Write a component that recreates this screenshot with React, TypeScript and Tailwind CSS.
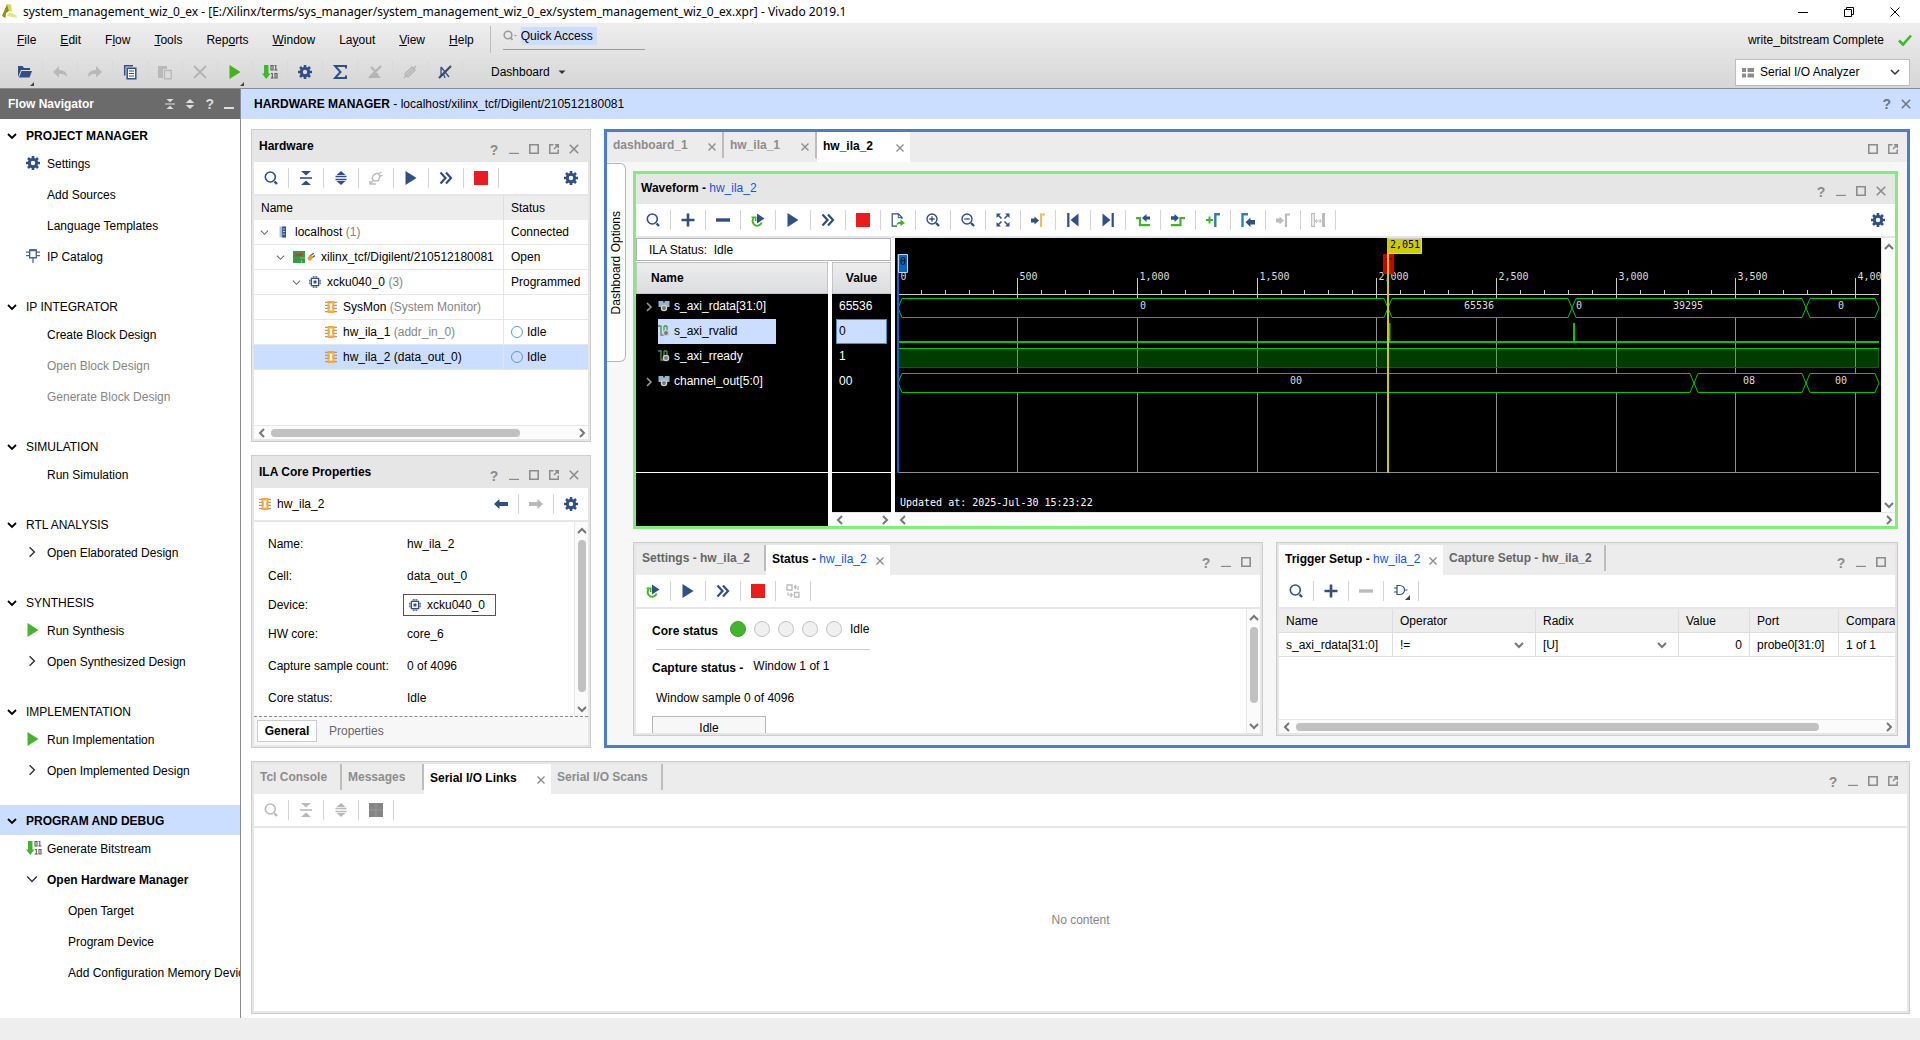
import React from 'react'

type IconProps = { className?: string }

const NAVY = '#2f4f87'
const GREEN = '#43b52a'

/* ---------- icons ---------- */

const Svg: React.FC<{ className?: string; box?: string; children: React.ReactNode }> = ({
  className = 'size-3.5',
  box = '0 0 14 14',
  children,
}) => (
  <svg viewBox={box} className={`shrink-0 ${className}`} fill="none" aria-hidden="true">
    {children}
  </svg>
)

const SearchIcon: React.FC<{ color?: string }> = ({ color = NAVY }) => (
  <Svg>
    <circle cx="6.3" cy="6" r="5" stroke={color} strokeWidth="1.6" />
    <path d="M10.5 10.5 L13 13" stroke={color} strokeWidth="2.4" />
  </Svg>
)

const CollapseIcon: React.FC<{ color?: string }> = ({ color = NAVY }) => (
  <Svg>
    <path d="M2 0H12L7 4.5ZM2 14H12L7 9.5Z" fill={color} />
    <path d="M1 7H13" stroke={color} strokeWidth="1.6" />
  </Svg>
)

const ExpandIcon: React.FC<{ color?: string }> = ({ color = NAVY }) => (
  <Svg>
    <path d="M2.5 4H11.5L7 0ZM2.5 10H11.5L7 14Z" fill={color} />
    <path d="M1.5 5.5H12.5M1.5 8.5H12.5" stroke={color} strokeWidth="1.6" />
  </Svg>
)

const PlugDimIcon = () => (
  <Svg>
    <path d="M4.5 4 L8.5 2 L11 5 L9.5 9.5 L5 10 L3 7.5Z" stroke="#bcbcbc" strokeWidth="1.4" />
    <path d="M1 13 L4 9.5M9.5 3 L12.5 1M11 5.5 L13.5 4" stroke="#bcbcbc" strokeWidth="1.4" />
    <path d="M1 10V13H7" stroke="#bcbcbc" strokeWidth="1.4" />
  </Svg>
)

const PlayIcon: React.FC<{ color?: string }> = ({ color = NAVY }) => (
  <Svg>
    <path d="M1.5 0 L12.5 7 L1.5 14Z" fill={color} />
  </Svg>
)

const ForwardIcon = () => (
  <Svg>
    <path d="M1.5 1.5 L6.5 7 L1.5 12.5M7 1.5 L12 7 L7 12.5" stroke={NAVY} strokeWidth="2.2" />
  </Svg>
)

const StopIcon = () => (
  <Svg>
    <path d="M0 0H14V14H0Z" fill="#ed1c1c" />
  </Svg>
)

const GearIcon: React.FC<{ className?: string }> = ({ className }) => (
  <Svg className={className}>
    <circle cx="7" cy="7" r="3.7" stroke={NAVY} strokeWidth="3" />
    <path
      d="M7 0V2.4M7 11.6V14M0 7H2.4M11.6 7H14M2 2 L3.8 3.8M10.2 10.2 L12 12M12 2 L10.2 3.8M3.8 10.2 L2 12"
      stroke={NAVY}
      strokeWidth="2.6"
    />
  </Svg>
)

const PlusIcon = () => (
  <Svg>
    <path d="M7 0.5V13.5M0.5 7H13.5" stroke={NAVY} strokeWidth="2.6" />
  </Svg>
)

const MinusIcon: React.FC<{ color?: string }> = ({ color = NAVY }) => (
  <Svg>
    <path d="M0 7H14" stroke={color} strokeWidth="3.4" />
  </Svg>
)

const RerunIcon = () => (
  <Svg>
    <path d="M6 0.5 L13.5 5.5 L6 10.5Z" fill={NAVY} />
    <path d="M2.8 5 A4.6 4.6 0 1 0 10.6 9.5" stroke={GREEN} strokeWidth="2" />
    <path d="M0.5 4.2H4.7V8" stroke={GREEN} strokeWidth="1.6" />
  </Svg>
)

const ExportIcon = () => (
  <Svg>
    <path d="M11 6V4.5L7.5 0.8H1.2V13.2H6" stroke={NAVY} strokeWidth="1.2" />
    <path d="M7.3 1V4.7H11" stroke={NAVY} strokeWidth="1" />
    <path d="M5.5 12.5C5.5 9.5 7 8.7 9.5 8.7V6.5L14 10L9.5 13V11C7.5 11 6.5 11.3 5.5 12.5Z" fill={GREEN} />
  </Svg>
)

const ZoomIcon: React.FC<{ plus?: boolean }> = ({ plus }) => (
  <Svg>
    <circle cx="6" cy="6" r="5" stroke={NAVY} strokeWidth="1.4" />
    <path d={plus ? 'M3.3 6H8.7M6 3.3V8.7' : 'M3.3 6H8.7'} stroke={NAVY} strokeWidth="1.3" />
    <path d="M10 10 L13 13" stroke={NAVY} strokeWidth="2.4" />
  </Svg>
)

const FitIcon = () => (
  <Svg>
    <path
      d="M0.5 0.5H5L0.5 5ZM13.5 0.5H9L13.5 5ZM0.5 13.5H5L0.5 9ZM13.5 13.5H9L13.5 9Z"
      fill={NAVY}
    />
    <path d="M2 2 L5.5 5.5M12 2 L8.5 5.5M2 12 L5.5 8.5M12 12 L8.5 8.5" stroke={NAVY} strokeWidth="1.5" />
  </Svg>
)

const ToCursorIcon: React.FC<{ arrow?: string; edge?: string }> = ({ arrow = NAVY, edge = '#e3c35a' }) => (
  <Svg>
    <path d="M0 5.5H3.5V3.5L8 7.5L3.5 11.5V9.5H0Z" fill={arrow} />
    <path d="M10 14V1.5H14" stroke={edge} strokeWidth="2.2" />
  </Svg>
)

const PrevIcon = () => (
  <Svg>
    <path d="M2.3 0V14" stroke={NAVY} strokeWidth="2.2" />
    <path d="M12.5 0.5V13.5L4.5 7Z" fill={NAVY} />
  </Svg>
)

const NextIcon = () => (
  <Svg>
    <path d="M11.7 0V14" stroke={NAVY} strokeWidth="2.2" />
    <path d="M1.5 0.5V13.5L9.5 7Z" fill={NAVY} />
  </Svg>
)

const PrevEdgeIcon = () => (
  <Svg>
    <path d="M0 5.2H4V12.2H14" stroke={GREEN} strokeWidth="2.2" />
    <path d="M14 3.5V6.5H10.5V9L6 5L10.5 1V3.5Z" fill={NAVY} />
  </Svg>
)

const NextEdgeIcon = () => (
  <Svg>
    <path d="M0 12.2H9.5V5.2H14" stroke={GREEN} strokeWidth="2.2" />
    <path d="M0 3.3V6.7H3.5V9L8 5L3.5 1V3.3Z" fill={NAVY} />
  </Svg>
)

const AddMarkerIcon = () => (
  <Svg>
    <path d="M0 7H7M3.5 3.5V10.5" stroke={GREEN} strokeWidth="2" />
    <path d="M9.3 14V1.3H14" stroke="#2f7fb5" strokeWidth="2.4" />
  </Svg>
)

const PrevMarkerIcon = () => (
  <Svg>
    <path d="M1.5 14V1.3H7" stroke="#2f7fb5" strokeWidth="2.4" />
    <path d="M14 7V11.5H9.5V14L4.5 9.3L9.5 4.5V7Z" fill={NAVY} />
  </Svg>
)

const SwapIcon = () => (
  <Svg>
    <path d="M0.7 0.7H3.3V13.3H0.7Z" stroke="#bcbcbc" strokeWidth="1.2" />
    <path d="M11 0H14V14H11Z" fill="#bcbcbc" />
    <path d="M4.5 8H10M6 6 L4.3 8 L6 10M8.7 6 L10.4 8 L8.7 10" stroke="#bcbcbc" />
  </Svg>
)

const WindowsDimIcon = () => (
  <Svg>
    <path d="M1 1H6V6H1ZM8.5 8.5H13V13H8.5Z" stroke="#bcbcbc" strokeWidth="1.3" />
    <path d="M12 6V3H9M10 1 L8.3 3 L10 5M2 8.5V11H5.5M4.5 9 L6.3 11 L4.5 13" stroke="#bcbcbc" strokeWidth="1.2" />
  </Svg>
)

/* logic gate with a drop-down corner below it */
const GateIcon = () => (
  <Svg className="size-[18px]" box="0 0 18 18">
    <path d="M5 3.5H7.5C11 3.5 12.5 6 12.5 8C12.5 10 11 12.5 7.5 12.5H5Z" stroke={NAVY} strokeWidth="1.2" />
    <path d="M2 6H5M2 10H5M12.5 8H15.5" stroke={NAVY} strokeWidth="1.2" />
    <path d="M18 13V18H13Z" fill="#444" />
  </Svg>
)

const FourBoxIcon = () => (
  <Svg>
    <path d="M0 0H14V14H0Z" fill="#858585" />
    <path d="M7 0V14M0 7H14" stroke="#9a9a9a" />
  </Svg>
)

const BitstreamIcon = () => (
  <Svg className="size-4" box="0 0 16 16">
    <path d="M2 1H6.5V9.5H8.5L4.3 15L0 9.5H2Z" fill={GREEN} />
    <path
      d="M9 1.5H11V6H9ZM12.5 1.5H13.8V6M12.3 6H15.5M9 9.5H10.3V14M8.7 14H11.8M13 9.5H15V14H13Z"
      stroke="#5a5a5a"
      strokeWidth="1.1"
    />
  </Svg>
)

const IlaIcon: React.FC<IconProps> = () => (
  <Svg className="size-3">
    <path d="M0 1.5H14M0 5H14M0 8.7H14M0 12.3H14" stroke="#9a9a9a" strokeWidth="1.4" />
    <path d="M3 0H11V14H3Z" fill="#f9a93a" />
    <path d="M5 3H9V4.5H8.3V9.5H9V11H5V9.5H5.7V4.5H5Z" fill="#fff" />
  </Svg>
)

const ChipIcon: React.FC<IconProps> = () => (
  <Svg className="size-3">
    <path d="M2.8 2.8H11.2V11.2H2.8Z" stroke={NAVY} strokeWidth="1.5" />
    <path d="M5.3 5.3H8.7V8.7H5.3Z" fill={NAVY} />
    <path
      d="M5 0V2M7 0V2M9 0V2M5 12V14M7 12V14M9 12V14M0 5H2M0 7H2M0 9H2M12 5H14M12 7H14M12 9H14"
      stroke={NAVY}
      strokeWidth="1.1"
    />
  </Svg>
)

const HostIcon = () => (
  <Svg className="size-3">
    <path d="M3 0.5H6V13.5L3 13Z" fill="#a9bfe0" />
    <path d="M6 0.5H10.5V13.5H6Z" fill="#2f4f87" />
    <path d="M7 3.5H9.5M7 6.5H9.5M7 9.5H9.5" stroke="#dfe8f6" />
  </Svg>
)

const BoardIcon = () => (
  <span className="flex items-center gap-0.5">
    <Svg className="size-3">
      <path d="M0 0H14V14H0Z" fill="#2fa043" />
      <path d="M3 3H11V6H3Z" fill="#d5332b" />
      <path d="M8 8H14M10 10V14" stroke="#7fcf8a" />
    </Svg>
    <Svg className="size-2">
      <path d="M0.5 9 L5 3 L10 7 L7.5 13 L3 13.5Z" fill="#f0a020" />
      <path d="M6 4.5 L12 0.5M9.5 8 L13.5 4.5" stroke="#555" strokeWidth="2.2" />
    </Svg>
  </span>
)

const ChevronDown: React.FC<{ className?: string; color?: string; width?: number }> = ({
  className = 'size-2.5',
  color = '#666',
  width = 1.2,
}) => (
  <Svg className={className} box="0 0 10 10">
    <path d="M1 3 L5 7 L9 3" stroke={color} strokeWidth={width} />
  </Svg>
)

const ChevronRight: React.FC<{ className?: string; color?: string; width?: number }> = ({
  className = 'size-2.5',
  color = '#333',
  width = 1.2,
}) => (
  <Svg className={className} box="0 0 10 10">
    <path d="M3 1 L7 5 L3 9" stroke={color} strokeWidth={width} />
  </Svg>
)

const ChevronLeft = () => (
  <Svg className="size-2.5" box="0 0 10 10">
    <path d="M7 1 L3 5 L7 9" stroke="#777" strokeWidth="2" />
  </Svg>
)

const ChevronUp = () => (
  <Svg className="size-2.5" box="0 0 10 10">
    <path d="M1 7 L5 3 L9 7" stroke="#777" strokeWidth="2" />
  </Svg>
)

const IpIcon = () => (
  <Svg>
    <path d="M3.7 1.5H10.3V8.7H3.7Z" stroke="#4a6797" strokeWidth="1.4" />
    <path d="M0 3.2H3.5M0 6.7H3.5M10.5 3.2H14M10.5 6.7H14M7 9V14M3.5 0.5H10.5" stroke="#4a6797" strokeWidth="1.3" />
  </Svg>
)

/* window glyphs in the panel title bars */
const windowGlyphs: Record<string, React.ReactNode> = {
  min: <path d="M0 9.5H10" stroke="#8c8c8c" strokeWidth="1.4" />,
  max: <path d="M0.8 0.8H9.2V9.2H0.8Z" stroke="#8c8c8c" strokeWidth="1.6" />,
  pop: <path d="M4.5 0.8H0.8V9.2H9.2V5.5M5 5 L8.5 1.5M6 0.8H9.3V4" stroke="#8c8c8c" strokeWidth="1.5" />,
  close: <path d="M0.8 0.8 L9.2 9.2M9.2 0.8 L0.8 9.2" stroke="#8c8c8c" strokeWidth="1.6" />,
}

const WindowButtons: React.FC<{ items: string[] }> = ({ items }) => (
  <div className="ml-auto flex gap-2.5 pt-1 pr-[9px]">
    {items.map((item) => (
      <button key={item} aria-label={item} className="grid size-2.5 place-items-center">
        {item === 'help' ? (
          <span className="text-sm leading-3 font-bold text-[#8c8c8c]">?</span>
        ) : (
          <Svg className="size-2.5" box="0 0 10 10">
            {windowGlyphs[item]}
          </Svg>
        )}
      </button>
    ))}
  </div>
)

/* ---------- shared pieces ---------- */

const Panel: React.FC<{ className?: string; children: React.ReactNode }> = ({ className = '', children }) => (
  <section className={`flex min-w-0 flex-col border border-[#ccc] bg-[#e6e6e6] p-0.5 ${className}`}>
    {children}
  </section>
)

const PanelTitle: React.FC<{ title: React.ReactNode; controls: string[] }> = ({ title, controls }) => (
  <header className="flex h-[30px] shrink-0 items-center bg-[#e6e6e6] pl-[5px]">
    <h2 className="pb-0.5 font-bold">{title}</h2>
    <WindowButtons items={controls} />
  </header>
)

const Toolbar: React.FC<{ icons: React.ReactNode[]; end?: React.ReactNode }> = ({ icons, end }) => (
  <div className="flex h-[34px] shrink-0 items-center border-b-2 border-[#e6e6e6] bg-white">
    {icons.map((icon, i) => (
      <button key={i} aria-label={`tool ${i + 1}`} className="grid h-5 w-[35px] place-items-center border-r border-[#d4d4d4]">
        {icon}
      </button>
    ))}
    {end && <div className="ml-auto pr-2.5">{end}</div>}
  </div>
)

const SmallClose = () => (
  <Svg className="size-2" box="0 0 8 8">
    <path d="M0.5 0.5 L7.5 7.5M7.5 0.5 L0.5 7.5" stroke="#8c8c8c" strokeWidth="1.4" />
  </Svg>
)

const Tab: React.FC<{ label: React.ReactNode; active?: boolean; close?: boolean; className: string }> = ({
  label,
  active,
  close,
  className,
}) => (
  <button
    className={`flex shrink-0 items-center justify-between pr-1.5 pl-1.5 font-bold whitespace-nowrap ${
      active ? 'h-[30px] bg-white pb-[3px] text-black' : 'h-[26px] border-r-2 border-[#bdbdbd]'
    } ${className}`}
  >
    <span>{label}</span>
    {close && (
      <span className="pt-1">
        <SmallClose />
      </span>
    )}
  </button>
)

const VScroll: React.FC<{ thumb?: string }> = ({ thumb }) => (
  <div className="flex w-3.5 shrink-0 flex-col items-center justify-between border-l border-[#e6e6e6] bg-[#fbfbfb] pt-1 pb-0.5">
    <ChevronUp />
    {thumb && <div className={`mt-1 mb-auto w-2 rounded-full bg-[#c1c1c1] ${thumb}`} />}
    <ChevronDown color="#777" width={2} />
  </div>
)

const HScroll: React.FC<{ thumb?: string }> = ({ thumb }) => (
  <div className="flex h-3.5 shrink-0 items-center justify-between border-t border-[#e6e6e6] bg-[#fbfbfb] pr-px pl-[3px]">
    <ChevronLeft />
    {thumb && <div className={`mr-auto ml-1 h-2 rounded-full bg-[#c1c1c1] ${thumb}`} />}
    <ChevronRight color="#777" width={2} />
  </div>
)

const Link: React.FC<{ children: React.ReactNode }> = ({ children }) => (
  <span className="font-normal text-[#0b57f0]">{children}</span>
)

/* ---------- top bars ---------- */

const menus: [string, string, string][] = [
  ['', 'F', 'ile'],
  ['', 'E', 'dit'],
  ['F', 'l', 'ow'],
  ['', 'T', 'ools'],
  ['Rep', 'o', 'rts'],
  ['', 'W', 'indow'],
  ['La', 'y', 'out'],
  ['', 'V', 'iew'],
  ['', 'H', 'elp'],
]

const corner = <path d="M16 12V16H12Z" fill="#444" />

const mainTools: React.ReactNode[] = [
  <Svg className="size-[18px]" box="0 0 18 18">
    <path d="M2 14V3H6.5L8 5H14V7H5L2 14Z" fill={NAVY} />
    <path d="M5.5 8H16L13.5 14.5H3Z" fill={NAVY} />
  </Svg>,
  <Svg className="size-4" box="0 0 16 16">
    <path d="M7 2V6C12 6 15 8 15 13C13 10.5 11 10 7 10V13.5L1 8Z" fill="#b9b9b9" />
  </Svg>,
  <Svg className="size-4" box="0 0 16 16">
    <path d="M9 2V6C4 6 1 8 1 13C3 10.5 5 10 9 10V13.5L15 8Z" fill="#b9b9b9" />
  </Svg>,
  <Svg className="size-4" box="0 0 16 16">
    <path d="M2.7 11.5V1.7H11" stroke={NAVY} strokeWidth="1.5" />
    <path d="M5.2 4.2H13.8V14.8H5.2Z" fill="#fff" stroke={NAVY} strokeWidth="1.5" />
    <path d="M7 7H12M7 9.5H12M7 12H12" stroke={NAVY} strokeWidth="1.2" />
  </Svg>,
  <Svg className="size-4" box="0 0 16 16">
    <path d="M1 2H10V5H6V14H1Z" fill="#b9b9b9" />
    <path d="M7.5 6.5H14.2V14.8H7.5Z" fill="#dcdcdc" stroke="#b9b9b9" strokeWidth="1.4" />
  </Svg>,
  <Svg>
    <path d="M1 1 L13 13M13 1 L1 13" stroke="#b5b5b5" strokeWidth="2" />
  </Svg>,
  <PlayIcon color="#3fb618" />,
  <BitstreamIcon />,
  <GearIcon />,
  <Svg>
    <path d="M13 3.5V1H2L7.5 7L2 13H13V10.5" stroke={NAVY} strokeWidth="2" />
  </Svg>,
  <Svg>
    <path d="M2 10V13H12.5L9 7.5Z" fill="#b5b5b5" />
    <path d="M1 13 L13 1M3 2 L7 6" stroke="#b5b5b5" strokeWidth="2.2" />
  </Svg>,
  <Svg>
    <path d="M1 13 L13 1M2 9 L9 2 L12 5 L5 12Z" stroke="#b5b5b5" strokeWidth="1.5" />
  </Svg>,
  <Svg>
    <path d="M3 2 L11 12M3 2V11L5.5 9L7 13" stroke={NAVY} strokeWidth="1.3" />
    <path d="M1 13 L13 1" stroke="#3f4a5c" strokeWidth="2.2" />
  </Svg>,
]

const TitleBar = () => (
  <div className="flex h-[23px] shrink-0 items-center bg-white pr-5">
    <Svg className="mr-1.5 ml-0.5 size-[15px]" box="0 0 15 15">
      <path d="M5 0 L9 0.5 L10 8 L7 7Z" fill="#d7dd4a" />
      <path d="M5 0 L7 7 L4 9 L3.5 14 L0 12Z" fill="#8f8f1a" />
      <path d="M7 8 L14 11 L15 14 L5 12Z" fill="#e2e58a" />
    </Svg>
    <h1 className="font-['Noto_Sans','Open_Sans',sans-serif] text-xs">
      system_management_wiz_0_ex - [E:/Xilinx/terms/sys_manager/system_management_wiz_0_ex/system_management_wiz_0_ex.xpr] - Vivado 2019.1
    </h1>
    <div className="ml-auto flex items-center gap-9">
      <button aria-label="Minimize">
        <Svg className="size-2.5" box="0 0 10 10">
          <path d="M0 5.5H10" stroke="#000" />
        </Svg>
      </button>
      <button aria-label="Restore">
        <Svg className="size-2.5" box="0 0 10 10">
          <path d="M0.5 2.5H7.5V9.5H0.5ZM2.5 2.5V0.5H9.5V7.5H7.5" stroke="#000" />
        </Svg>
      </button>
      <button aria-label="Close">
        <Svg className="size-2.5" box="0 0 10 10">
          <path d="M0.5 0.5 L9.5 9.5M9.5 0.5 L0.5 9.5" stroke="#000" />
        </Svg>
      </button>
    </div>
  </div>
)

const TopBars = () => (
  <div className="shrink-0 border-b border-[#8c8c8c] bg-linear-to-b from-[#eee] to-[#d6d6d6]">
    <div className="flex h-[33px] items-center">
      <nav className="flex gap-6 pl-[17px]">
        {menus.map(([pre, key, post]) => (
          <button key={pre + key + post}>
            {pre}
            <u>{key}</u>
            {post}
          </button>
        ))}
      </nav>
      <div className="ml-4 flex h-[27px] items-start border-l border-[#bdbdbd] pl-3">
        <label className="flex h-6 w-[142px] items-center gap-1 border-b border-[#9a9a9a] pb-1">
          <Svg box="0 0 14 14">
            <circle cx="5" cy="6" r="3.8" stroke="#9a9a9a" strokeWidth="1.6" />
            <path d="M7.5 8.5 L9.5 11" stroke="#9a9a9a" strokeWidth="1.8" />
            <path d="M11 6H14L12.5 7.5Z" fill="#9a9a9a" />
          </Svg>
          <input aria-label="Quick Access" defaultValue="Quick Access" className="h-[18px] w-[76px] bg-[#ccdeff] outline-none" />
        </label>
      </div>
      <div className="ml-auto flex items-center gap-3.5 pr-2">
        <span>write_bitstream Complete</span>
        <Svg>
          <path d="M1 7.5 L5 11.5 L13 2.5" stroke={GREEN} strokeWidth="2.6" />
        </Svg>
      </div>
    </div>
    <div className="flex h-8 items-center pl-2">
      {mainTools.map((icon, i) => (
        <button key={i} aria-label={`action ${i + 1}`} className="relative grid h-6 w-[35px] place-items-center border-r border-[#d9d9d9]">
          {icon}
          {(i === 0 || i === 6) && (
            <Svg className="absolute right-2 -bottom-0.5 size-4" box="0 0 16 16">
              {corner}
            </Svg>
          )}
        </button>
      ))}
      <button className="ml-7 flex items-center gap-2">
        Dashboard
        <Svg className="size-2" box="0 0 8 8">
          <path d="M0.5 2.5H7.5L4 6Z" fill="#333" />
        </Svg>
      </button>
      <label className="relative mr-2.5 ml-auto">
        <span className="pointer-events-none absolute top-2 left-[7px]">
          <Svg className="size-3" box="0 0 12 12">
            <path d="M0 1H4V5H0ZM0 6.5H4V10.5H0ZM5.5 1H12V5H5.5ZM5.5 6.5H12V10.5H5.5Z" fill="#8c8c8c" />
          </Svg>
        </span>
        <select aria-label="Layout" className="h-[27px] w-[175px] appearance-none border border-[#bdbdbd] bg-white pl-6">
          <option>Serial I/O Analyzer</option>
        </select>
        <span className="pointer-events-none absolute top-2 right-2.5">
          <ChevronDown color="#333" width={1.5} />
        </span>
      </label>
    </div>
  </div>
)

/* ---------- flow navigator ---------- */

type NavItem = { label: string; icon?: 'gear' | 'ip' | 'run' | 'bit' | 'right' | 'down'; dim?: boolean; bold?: boolean; sub?: boolean }
type NavSection = { title: string; bold?: boolean; active?: boolean; items: NavItem[] }

const flow: NavSection[] = [
  {
    title: 'PROJECT MANAGER',
    bold: true,
    items: [
      { label: 'Settings', icon: 'gear' },
      { label: 'Add Sources' },
      { label: 'Language Templates' },
      { label: 'IP Catalog', icon: 'ip' },
    ],
  },
  {
    title: 'IP INTEGRATOR',
    items: [
      { label: 'Create Block Design' },
      { label: 'Open Block Design', dim: true },
      { label: 'Generate Block Design', dim: true },
    ],
  },
  { title: 'SIMULATION', items: [{ label: 'Run Simulation' }] },
  { title: 'RTL ANALYSIS', items: [{ label: 'Open Elaborated Design', icon: 'right' }] },
  {
    title: 'SYNTHESIS',
    items: [
      { label: 'Run Synthesis', icon: 'run' },
      { label: 'Open Synthesized Design', icon: 'right' },
    ],
  },
  {
    title: 'IMPLEMENTATION',
    items: [
      { label: 'Run Implementation', icon: 'run' },
      { label: 'Open Implemented Design', icon: 'right' },
    ],
  },
  {
    title: 'PROGRAM AND DEBUG',
    bold: true,
    active: true,
    items: [
      { label: 'Generate Bitstream', icon: 'bit' },
      { label: 'Open Hardware Manager', icon: 'down', bold: true },
      { label: 'Open Target', sub: true },
      { label: 'Program Device', sub: true },
      { label: 'Add Configuration Memory Device', sub: true },
    ],
  },
]

const navIcons = {
  gear: <GearIcon />,
  ip: <IpIcon />,
  run: <PlayIcon color={GREEN} />,
  bit: <BitstreamIcon />,
  right: <ChevronRight className="size-3" />,
  down: <ChevronDown className="size-3" color="#333" />,
}

const FlowNavigator = () => (
  <aside className="flex w-[241px] shrink-0 flex-col overflow-hidden border-r border-[#8c8c8c] bg-white">
    <header className="flex h-[30px] shrink-0 items-center justify-between bg-[#6b6b6b] pr-1.5 pl-2 text-white">
      <h2 className="font-bold">Flow Navigator</h2>
      <div className="flex items-center gap-2.5">
        <Svg className="size-2.5">
          <path d="M2 0H12L7 4.5ZM2 14H12L7 9.5ZM0 6.3H14V7.7H0Z" fill="#ddd" />
        </Svg>
        <Svg className="size-2.5">
          <path d="M1 5.5H13L7 0ZM1 8.5H13L7 14Z" fill="#ddd" />
        </Svg>
        <span className="text-sm leading-3 font-bold text-[#ddd]">?</span>
        <Svg className="size-2.5" box="0 0 10 10">
          <path d="M0 9H10" stroke="#ddd" strokeWidth="2" />
        </Svg>
      </div>
    </header>
    <nav className="flex flex-col gap-[17px] pt-px">
      {flow.map((section) => (
        <div key={section.title}>
          <button
            className={`flex h-[30px] w-full items-center gap-[9px] pt-0.5 pl-[7px] ${section.bold ? 'font-bold' : ''} ${
              section.active ? 'bg-[#ccdeff]' : ''
            }`}
          >
            <ChevronDown color="#000" width={1.8} />
            {section.title}
          </button>
          {section.items.map((item) => (
            <button
              key={item.label}
              className={`flex h-[31px] w-full items-center pb-[3px] whitespace-nowrap ${item.sub ? 'pl-[47px]' : 'pl-[26px]'} ${
                item.dim ? 'text-[#858585]' : ''
              } ${item.bold ? 'font-bold' : ''}`}
            >
              <span className="w-[21px] shrink-0 pb-0.5">{item.icon && navIcons[item.icon]}</span>
              {item.label}
            </button>
          ))}
        </div>
      ))}
    </nav>
  </aside>
)

/* ---------- hardware ---------- */

type HwRow = { depth: number; icon: React.ReactNode; name: string; note?: string; status: string; leaf?: boolean; selected?: boolean }

const hwRows: HwRow[] = [
  { depth: 0, icon: <HostIcon />, name: 'localhost', note: '(1)', status: 'Connected' },
  { depth: 1, icon: <BoardIcon />, name: 'xilinx_tcf/Digilent/210512180081', status: 'Open' },
  { depth: 2, icon: <ChipIcon />, name: 'xcku040_0', note: '(3)', status: 'Programmed' },
  { depth: 3, icon: <IlaIcon />, name: 'SysMon', note: '(System Monitor)', status: '', leaf: true },
  { depth: 3, icon: <IlaIcon />, name: 'hw_ila_1', note: '(addr_in_0)', status: 'Idle', leaf: true },
  { depth: 3, icon: <IlaIcon />, name: 'hw_ila_2', note: '(data_out_0)', status: 'Idle', leaf: true, selected: true },
]

const indents = ['pl-1.5', 'pl-[22px]', 'pl-[38px]', 'pl-[54px]']

const HardwarePanel = () => (
  <Panel className="h-[313px]">
    <PanelTitle title="Hardware" controls={['help', 'min', 'max', 'pop', 'close']} />
    <Toolbar
      icons={[<SearchIcon />, <CollapseIcon />, <ExpandIcon />, <PlugDimIcon />, <PlayIcon />, <ForwardIcon />, <StopIcon />]}
      end={<GearIcon />}
    />
    <div className="min-h-0 flex-1 overflow-hidden bg-white">
      <table className="w-full table-fixed border-separate border-spacing-0 text-left">
        <thead>
          <tr className="h-6 bg-[#ededed]">
            <th className="w-[250px] border-r border-[#dedede] pl-[7px] font-normal">Name</th>
            <th className="pl-[7px] font-normal">Status</th>
          </tr>
        </thead>
        <tbody>
          {hwRows.map((row) => (
            <tr key={row.name} className={row.selected ? 'bg-[#ccdeff]' : ''}>
              <td className={`h-[25px] overflow-hidden border-r border-b border-[#e6e6e6] p-0 ${indents[row.depth]}`}>
                <div className="flex items-center gap-1.5 whitespace-nowrap">
                  {row.leaf ? <span className="mr-0.5 w-[9px]" /> : <ChevronDown className="mr-0.5 size-[9px]" />}
                  {row.icon}
                  <span>
                    {row.name} {row.note && <span className={row.selected ? '' : 'text-[#858585]'}>{row.note}</span>}
                  </span>
                </div>
              </td>
              <td className="h-[25px] border-b border-[#e6e6e6] p-0 pl-[7px]">
                <div className="flex items-center gap-1">
                  {row.status === 'Idle' && (
                    <span className={`size-3 rounded-full border border-[#5b9fc0] ${row.selected ? '' : 'bg-white'}`} />
                  )}
                  {row.status}
                </div>
              </td>
            </tr>
          ))}
        </tbody>
      </table>
    </div>
    <HScroll thumb="w-[249px]" />
  </Panel>
)

/* ---------- properties ---------- */

const properties: [string, string][] = [
  ['Name:', 'hw_ila_2'],
  ['Cell:', 'data_out_0'],
  ['Device:', 'xcku040_0'],
  ['HW core:', 'core_6'],
  ['Capture sample count:', '0 of 4096'],
  ['Core status:', 'Idle'],
]

const PropertiesPanel = () => (
  <Panel className="h-[293px]">
    <PanelTitle title="ILA Core Properties" controls={['help', 'min', 'max', 'pop', 'close']} />
    <div className="flex h-[34px] shrink-0 items-center gap-1.5 border-b-2 border-[#e6e6e6] bg-white pl-[5px]">
      <IlaIcon />
      hw_ila_2
      <div className="ml-auto flex items-center">
        <button aria-label="Back" className="grid h-5 w-[35px] place-items-center border-r border-[#d4d4d4]">
          <Svg>
            <path d="M0 7 L5.5 2V5H14V9H5.5V12Z" fill={NAVY} />
          </Svg>
        </button>
        <button aria-label="Forward" className="grid h-5 w-[35px] place-items-center border-r border-[#d4d4d4]">
          <Svg>
            <path d="M14 7 L8.5 2V5H0V9H8.5V12Z" fill="#b9b9b9" />
          </Svg>
        </button>
        <button aria-label="Options" className="px-2.5">
          <GearIcon />
        </button>
      </div>
    </div>
    <div className="flex min-h-0 flex-1 bg-white">
      <dl className="grid flex-1 grid-cols-[139px_1fr] content-start items-center overflow-hidden pt-1.5 pl-3.5">
        {properties.map(([label, value]) => {
          const isDevice = label === 'Device:'
          const height = isDevice ? 'h-[26px]' : 'h-8'
          return (
            <React.Fragment key={label}>
              <dt className={`flex items-center ${height}`}>{label}</dt>
              <dd className={`flex items-center ${height}`}>
                {isDevice ? (
                  <button className="-ml-1 flex h-[22px] w-[93px] items-center gap-1.5 border border-[#555] pl-[5px]">
                    <ChipIcon />
                    {value}
                  </button>
                ) : (
                  value
                )}
              </dd>
            </React.Fragment>
          )
        })}
      </dl>
      <VScroll thumb="h-[152px]" />
    </div>
    <div className="flex h-[29px] shrink-0 items-center gap-3 border-t border-dashed border-[#8c8c8c] bg-[#f7f7f7] pl-[3px]">
      <button className="h-[22px] w-[60px] border border-[#ccc] bg-white font-bold">General</button>
      <button className="text-[#666]">Properties</button>
    </div>
  </Panel>
)

/* ---------- waveform ---------- */

const PX_PER_SAMPLE = 0.2394
const ORIGIN = 3
const WAVE_END = 984
const toX = (sample: number) => Math.floor(ORIGIN + sample * PX_PER_SAMPLE) + 0.5

const majors = [0, 500, 1000, 1500, 2000, 2500, 3000, 3500, 4000]
const minors = Array.from({ length: 41 }, (_, i) => i * 100).filter((v) => v % 500 !== 0)

const busPath = (edges: number[], top: number, bottom: number) => {
  const mid = (top + bottom) / 2
  return edges
    .slice(0, -1)
    .map((start, i) => {
      const end = edges[i + 1]
      return `M${start} ${mid} L${start + 4} ${top} H${end - 4} L${end} ${mid} L${end - 4} ${bottom} H${start + 4} Z`
    })
    .join(' ')
}

const waveTexts: [number, number, string][] = [
  [248, 71, '0'],
  [584, 71, '65536'],
  [684, 71, '0'],
  [793, 71, '39295'],
  [946, 71, '0'],
  [401, 146, '00'],
  [854, 146, '08'],
  [946, 146, '00'],
]

const WaveCanvas = () => (
  <svg
    width="986"
    height="274"
    fill="none"
    className="block font-['DejaVu_Sans_Mono',monospace] text-[10px]"
    role="img"
    aria-label="hw_ila_2 waveform"
  >
    <path d="M3 56.5H984" stroke="#ccc" />
    {minors.map((v) => (
      <path key={v} d={`M${toX(v)} 52V56`} stroke="#ccc" />
    ))}
    {majors.slice(1).map((v) => (
      <path key={v} d={`M${toX(v)} 60V234`} stroke="#8f8f8f" />
    ))}
    {majors.slice(1).map((v) => (
      <path key={v} d={`M${toX(v)} 40V60`} stroke="#ccc" />
    ))}
    {majors.map((v) => (
      <text key={v} x={toX(v) + 2} y="42" fill="#ddd">
        {v.toLocaleString('en-US')}
      </text>
    ))}
    <path d="M3 234.5H984" stroke="#8f8f8f" />

    <path d={busPath([3, 493, 677, 911, WAVE_END], 60.5, 79.5)} fill="#000" stroke="#00c800" />
    <path d={busPath([3, 799, 911, WAVE_END], 135.5, 154.5)} fill="#000" stroke="#00c800" />
    <path d="M3 104H984M494.5 85V104" stroke="#00c800" strokeWidth="2" />
    <path d="M679 85V104" stroke="#00c800" strokeWidth="2" />
    <path d="M3 111H983V130H3Z" fill="#00c800" fillOpacity="0.3" />
    <path d="M3 110.5H984" stroke="#00c800" />
    <path d="M3 129.5H983.5V111" stroke="#006400" />
    {waveTexts.map(([x, y, value]) => (
      <text key={`${x}-${y}`} x={x} y={y} fill="#ddd" textAnchor="middle">
        {value}
      </text>
    ))}

    <path d="M2 16H4V235H2Z" fill="#0a62c9" />
    <path d="M3.5 16.5H12.5V34.5H3.5Z" fill="#0066cc" stroke="#b8d4f0" />
    <text x="5" y="27" fill="#000">
      0
    </text>

    <path d="M488 16H499V36H488Z" fill="#c00" />
    <path d="M491 22V20.5H496V22M493.5 20V28" stroke="#300" />
    <path d="M492.5 0.5H526.5V15.5H492.5Z" fill="#cc0" stroke="#ccc" />
    <path d="M493 0V235" stroke="#cc0" strokeWidth="2" />
    <text x="495" y="10" fill="#000">
      2,051
    </text>
    <text x="5" y="268" fill="#fff">
      Updated at: 2025-Jul-30 15:23:22
    </text>
  </svg>
)

type Signal = { name: string; value: string; bus?: boolean; selected?: boolean }

const signals: Signal[] = [
  { name: 's_axi_rdata[31:0]', value: '65536', bus: true },
  { name: 's_axi_rvalid', value: '0', selected: true },
  { name: 's_axi_rready', value: '1' },
  { name: 'channel_out[5:0]', value: '00', bus: true },
]

const SignalIcon: React.FC<{ bus?: boolean }> = ({ bus }) => (
  <Svg className="size-3" box="0 0 12 12">
    {bus ? (
      <path d="M0.5 1H5L6 3L7 1H11.5V7H0.5Z" fill="#8fb6cc" />
    ) : (
      <path d="M0 1H3V10H6M6 1V8M9 1V8M6 1H9" stroke="#3f9a4a" strokeWidth="1.3" />
    )}
    <circle cx={bus ? 6 : 8} cy="8" r="2.6" fill="#777" stroke="#ccc" strokeWidth="1.4" />
  </Svg>
)

const headerCell = 'flex h-8 shrink-0 items-center border border-[#c4c4c4] bg-linear-to-b from-[#ededed] to-[#dcdde0] font-bold'

const WaveformPanel = () => (
  <section className="flex h-[358px] min-w-0 flex-col border-[3px] border-[#83ec7b] bg-white">
    <PanelTitle
      title={
        <>
          Waveform - <Link>hw_ila_2</Link>
        </>
      }
      controls={['help', 'min', 'max', 'close']}
    />
    <Toolbar
      icons={[
        <SearchIcon />,
        <PlusIcon />,
        <MinusIcon />,
        <RerunIcon />,
        <PlayIcon />,
        <ForwardIcon />,
        <StopIcon />,
        <ExportIcon />,
        <ZoomIcon plus />,
        <ZoomIcon />,
        <FitIcon />,
        <ToCursorIcon />,
        <PrevIcon />,
        <NextIcon />,
        <PrevEdgeIcon />,
        <NextEdgeIcon />,
        <AddMarkerIcon />,
        <PrevMarkerIcon />,
        <ToCursorIcon arrow="#bcbcbc" edge="#bcbcbc" />,
        <SwapIcon />,
      ]}
      end={<GearIcon />}
    />
    <div className="flex min-h-0 flex-1">
      <div className="mr-1 flex w-[255px] shrink-0 flex-col">
        <div className="mb-px flex h-[23px] shrink-0 items-center border border-[#b5b5b5] pl-3 whitespace-pre">ILA Status:  Idle</div>
        <div className="flex min-h-0 flex-1 gap-1">
          <div className="flex w-[192px] flex-col bg-black text-white">
            <div className={`${headerCell} pl-3.5 text-black`}>Name</div>
            <ul className="h-[179px] shrink-0 border-b border-white">
              {signals.map((s) => (
                <li key={s.name} className="flex h-[25px] items-center pl-2">
                  <span className="w-3.5">{s.bus && <ChevronRight color="#999" width={1.6} />}</span>
                  <span className={`flex h-full items-center gap-1 pb-0.5 ${s.selected ? 'w-[118px] bg-[#ccdeff] text-black' : ''}`}>
                    <SignalIcon bus={s.bus} />
                    {s.name}
                  </span>
                </li>
              ))}
            </ul>
          </div>
          <div className="flex flex-1 flex-col bg-black text-white">
            <div className={`${headerCell} justify-center text-black`}>Value</div>
            <ul className="h-[179px] shrink-0 border-b border-white px-1">
              {signals.map((s) => (
                <li
                  key={s.name}
                  className={`flex h-[25px] items-center border pb-0.5 pl-0.5 ${
                    s.selected ? 'border-[#4a90d0] bg-[#ccdeff] text-black' : 'border-black'
                  }`}
                >
                  {s.value}
                </li>
              ))}
            </ul>
            <div className="mt-auto">
              <HScroll />
            </div>
          </div>
        </div>
      </div>
      <div className="flex min-w-0 flex-1 flex-col">
        <div className="flex min-h-0 flex-1">
          <div className="min-w-0 flex-1 overflow-hidden bg-black">
            <WaveCanvas />
          </div>
          <VScroll />
        </div>
        <HScroll />
      </div>
    </div>
  </section>
)

/* ---------- status and trigger ---------- */

const StatusPanel = () => (
  <Panel className="h-[194px] flex-1">
    <header className="flex h-[30px] shrink-0 bg-[#ececec] text-[#666]">
      <Tab label="Settings - hw_ila_2" className="w-[130px]" />
      <Tab
        active
        close
        label={
          <>
            Status - <Link>hw_ila_2</Link>
          </>
        }
        className="w-[124px]"
      />
      <div className="ml-auto flex items-center">
        <WindowButtons items={['help', 'min', 'max']} />
      </div>
    </header>
    <Toolbar icons={[<RerunIcon />, <PlayIcon />, <ForwardIcon />, <StopIcon />, <WindowsDimIcon />]} />
    <div className="flex min-h-0 flex-1 overflow-hidden bg-white">
      <div className="flex-1 overflow-hidden pt-3 pl-4">
        <div className="flex h-4 items-center">
          <span className="pt-1 pr-3 font-bold">Core status</span>
          <div className="flex gap-2">
            <span className="size-4 rounded-full border border-[#3a9f24] bg-[#43b52a]" />
            {[1, 2, 3, 4].map((n) => (
              <span key={n} className="size-4 rounded-full border border-[#c4c4c4] bg-[#f0f0f0]" />
            ))}
          </div>
          <span className="pl-2">Idle</span>
        </div>
        <div className="mt-3 ml-1 w-[214px] border-b border-[#ccc]" />
        <div className="mt-2 flex gap-2.5">
          <span className="pt-0.5 font-bold">Capture status -</span>
          <span>Window 1 of 1</span>
        </div>
        <div className="mt-3.5 pl-1">Window sample 0 of 4096</div>
        <div className="mt-2.5 flex h-6 w-[114px] items-center justify-center border border-[#b5b5b5] bg-[#f7f7f7]">Idle</div>
      </div>
      <VScroll thumb="h-[76px]" />
    </div>
  </Panel>
)

const triggerCell = 'h-6 border-r border-b border-[#dedede] p-0 px-[7px] font-normal'

const TriggerPanel = () => (
  <Panel className="h-[194px] w-[622px] shrink-0">
    <header className="flex h-[30px] shrink-0 bg-[#ececec] text-[#666]">
      <Tab
        active
        close
        label={
          <>
            Trigger Setup - <Link>hw_ila_2</Link>
          </>
        }
        className="w-[164px]"
      />
      <Tab label="Capture Setup - hw_ila_2" className="w-[163px]" />
      <div className="ml-auto flex items-center">
        <WindowButtons items={['help', 'min', 'max']} />
      </div>
    </header>
    <Toolbar icons={[<SearchIcon />, <PlusIcon />, <MinusIcon color="#bcbcbc" />, <GateIcon />]} />
    <div className="min-h-0 flex-1 overflow-hidden bg-white">
      <table className="w-full table-fixed border-separate border-spacing-0 text-left whitespace-nowrap">
        <thead>
          <tr className="bg-[#ededed]">
            <th className={`${triggerCell} w-[114px]`}>Name</th>
            <th className={`${triggerCell} w-[143px]`}>Operator</th>
            <th className={`${triggerCell} w-[143px]`}>Radix</th>
            <th className={`${triggerCell} w-[71px]`}>Value</th>
            <th className={`${triggerCell} w-[89px]`}>Port</th>
            <th className="h-6 overflow-hidden border-b border-[#dedede] p-0 pl-[7px] font-normal">Comparator Usage</th>
          </tr>
        </thead>
        <tbody>
          <tr>
            <td className={triggerCell}>s_axi_rdata[31:0]</td>
            <td className={triggerCell}>
              <label className="flex items-center pr-1">
                <select aria-label="Operator" className="flex-1 appearance-none bg-white">
                  <option>!=</option>
                </select>
                <ChevronDown color="#777" width={2} />
              </label>
            </td>
            <td className={triggerCell}>
              <label className="flex items-center pr-1">
                <select aria-label="Radix" className="flex-1 appearance-none bg-white">
                  <option>[U]</option>
                </select>
                <ChevronDown color="#777" width={2} />
              </label>
            </td>
            <td className={`${triggerCell} text-right`}>0</td>
            <td className={triggerCell}>probe0[31:0]</td>
            <td className="border-b border-[#dedede] p-0 pl-[7px]">1 of 1</td>
          </tr>
        </tbody>
      </table>
    </div>
    <HScroll thumb="w-[523px]" />
  </Panel>
)

const Dashboard = () => (
  <section className="flex min-w-0 flex-1 flex-col border-[3px] border-[#4a7dcf] bg-[#f7f7f7]">
    <header className="flex h-[30px] shrink-0 bg-[#ececec] text-[#8c8c8c]">
      <Tab label="dashboard_1" close className="w-[117px]" />
      <Tab label="hw_ila_1" close className="w-[93px]" />
      <Tab label="hw_ila_2" active close className="w-[93px]" />
      <div className="ml-auto flex items-center">
        <WindowButtons items={['max', 'pop']} />
      </div>
    </header>
    <div className="flex min-h-0 flex-1">
      <button className="mt-px flex h-[199px] w-[19px] shrink-0 items-center justify-center rounded-r-md border border-l-0 border-[#b5b5b5] bg-white">
        <span className="rotate-180 [writing-mode:vertical-rl]">Dashboard Options</span>
      </button>
      <div className="flex min-w-0 flex-1 flex-col gap-[13px] pt-[9px] pr-[9px] pl-[7px]">
        <WaveformPanel />
        <div className="flex gap-[13px]">
          <StatusPanel />
          <TriggerPanel />
        </div>
      </div>
    </div>
  </section>
)

const ConsolePanel = () => (
  <Panel className="min-h-[253px] flex-1">
    <header className="flex h-[30px] shrink-0 bg-[#ececec] text-[#8c8c8c]">
      <Tab label="Tcl Console" className="w-[88px]" />
      <Tab label="Messages" className="w-[82px]" />
      <Tab label="Serial I/O Links" active close className="w-[127px]" />
      <Tab label="Serial I/O Scans" className="w-[112px]" />
      <div className="ml-auto flex items-center">
        <WindowButtons items={['help', 'min', 'max', 'pop']} />
      </div>
    </header>
    <Toolbar
      icons={[<SearchIcon color="#b9b9b9" />, <CollapseIcon color="#b9b9b9" />, <ExpandIcon color="#b9b9b9" />, <FourBoxIcon />]}
    />
    <div className="grid flex-1 place-items-center bg-white text-[#858585]">No content</div>
  </Panel>
)

export default function App() {
  return (
    <div className="flex min-h-screen flex-col bg-[#eee] font-['Liberation_Sans',Arial,sans-serif] text-xs text-black">
      <TitleBar />
      <TopBars />
      <div className="flex flex-1">
        <FlowNavigator />
        <main className="flex min-w-0 flex-1 flex-col bg-white">
          <header className="flex h-[30px] shrink-0 items-center bg-[#ccdeff] pr-[9px] pl-[13px]">
            <h2>
              <b>HARDWARE MANAGER</b> - localhost/xilinx_tcf/Digilent/210512180081
            </h2>
            <div className="ml-auto flex items-center gap-2.5">
              <span className="text-sm font-bold text-[#6b7480]">?</span>
              <button aria-label="Close">
                <Svg className="size-2.5" box="0 0 10 10">
                  <path d="M0.8 0.8 L9.2 9.2M9.2 0.8 L0.8 9.2" stroke="#6b7480" strokeWidth="1.5" />
                </Svg>
              </button>
            </div>
          </header>
          <div className="flex flex-1 flex-col gap-[13px] px-2.5 pt-2.5 pb-1">
            <div className="flex gap-[13px]">
              <div className="flex w-[340px] shrink-0 flex-col gap-[13px]">
                <HardwarePanel />
                <PropertiesPanel />
              </div>
              <Dashboard />
            </div>
            <ConsolePanel />
          </div>
        </main>
      </div>
      <footer className="h-[22px] shrink-0 bg-[#eee]" />
    </div>
  )
}
